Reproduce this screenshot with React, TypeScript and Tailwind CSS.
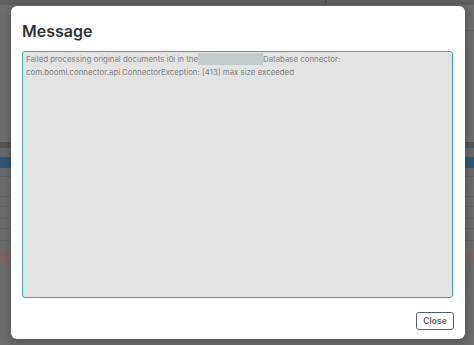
import React from "react";

export default function App() {
  return (
    <div className="relative w-[474px] h-[345px] overflow-hidden bg-[#6c6c6c]" style={{ fontFamily: "Inter, 'Noto Sans', sans-serif" }}>
      {/* dimmed app behind */}
      <div className="flex flex-col w-full h-full">
        <div className="flex h-[5px] bg-[#5e5e5e]">
          <div className="w-[326px] border-r border-[#4a4a4a]" />
          <div className="flex-1" />
        </div>
        <div className="flex h-[25px]">
          <div className="flex-1" />
        </div>
        <div className="h-px bg-[#626262] ml-[465px]" />
        <div className="h-[111px]" />
        <div className="h-[6px] bg-[#545454]" />
        <div className="h-[9px] bg-[#686868]" />
        <div className="h-[11px] bg-[#2f5776]" />
        <div className="h-[9px] bg-[#6a6a6a] border-b border-[#626262]" />
        <div className="h-[20px] border-b border-[#646464]" />
        <div className="h-[10px] border-b border-[#646464]" />
        <div className="h-[12px] border-b border-[#646464]" />
        <div className="h-[10px] border-b border-[#646464]" />
        <div className="h-[12px] border-b border-[#646464]" />
        <div className="h-[10px]" />
        <div className="h-[12px] bg-[#7a6464]" />
        <div className="flex-1" />
      </div>

      {/* modal */}
      <div className="absolute left-[11px] top-[6px] w-[454px] h-[333px] bg-white rounded-[6px] shadow-[0_2px_8px_rgba(0,0,0,0.3)] flex flex-col pl-[11px] pr-[12px] pt-[11px] pb-[9px]">
        <h2 className="h-[24px] leading-[24px] pt-[2px] text-[16px] font-semibold text-[#333333]">Message</h2>
        <div className="mt-[10px] h-[247px] bg-[#e3e3e3] border border-[#3aa8a3] rounded-[3px] px-[3px] pt-[1px] text-[7.85px] leading-[12.5px] text-[#7d7d7d]">
          <div className="flex items-start">
            <span>Failed processing original documents i0i in the</span>
            <span className="inline-block w-[65px] h-[12px] bg-[#c3cbcd]" />
            <span>Database connector:</span>
          </div>
          <div>com.boomi.connector.api.ConnectorException: [413] max size exceeded</div>
        </div>
        <div className="flex justify-end mt-[14px] -mr-[1px]">
          <button className="h-[18px] w-[38px] border border-[#4f5b66] rounded-[3px] bg-white text-[8.5px] font-semibold text-[#555b61] flex items-center justify-center">
            Close
          </button>
        </div>
      </div>
    </div>
  );
}
